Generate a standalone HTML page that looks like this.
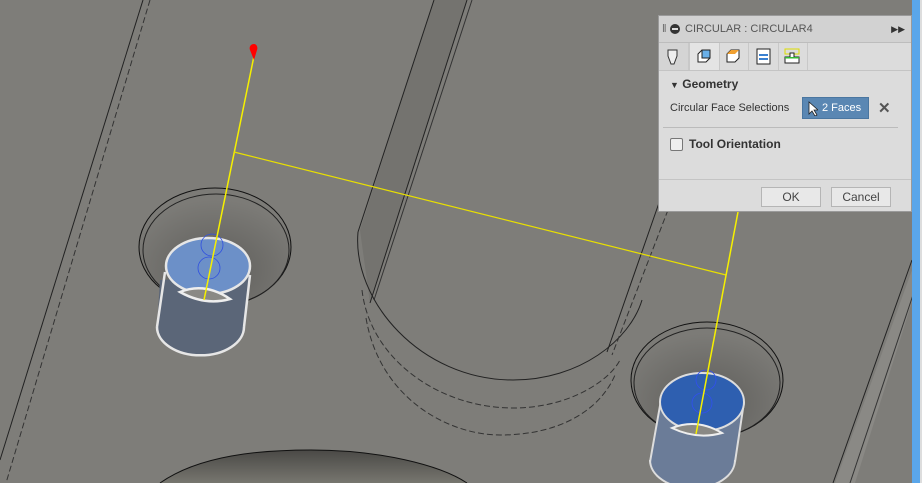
<!DOCTYPE html>
<html><head><meta charset="utf-8"><style>
body{margin:0;width:922px;height:483px;overflow:hidden;background:#7e7d79;font-family:"Liberation Sans",sans-serif;position:relative}
svg{position:absolute;left:0;top:0}
.dlg{position:absolute;left:658px;top:15px;width:254px;height:197px;background:#dcdcdc;border:1px solid #9a9a9a;box-sizing:border-box}
.title{height:26px;background:#d2d2d2;border-bottom:1px solid #bdbdbd;font-size:11px;color:#555;line-height:26px;padding-left:26px;position:relative}
.tabs{height:27px;border-bottom:1px solid #c4c4c4;position:relative}
.tab{position:absolute;top:0;width:29px;height:27px;border-right:1px solid #c8c8c8}
.btn{position:absolute;top:171px;height:18px;border:1px solid #b5b5b5;background:#e8e8e8;font-size:12px;color:#444;text-align:center;line-height:18px}
</style></head><body>
<svg width="922" height="483" viewBox="0 0 922 483">
<defs>
<radialGradient id="cs" cx="0.5" cy="0.7" r="0.6"><stop offset="0" stop-color="#5e5d5a"/><stop offset="1" stop-color="#7c7b77"/></radialGradient>
<linearGradient id="bh" x1="0" y1="0" x2="0" y2="1"><stop offset="0" stop-color="#4a4946"/><stop offset="1" stop-color="#77766f"/></linearGradient>
</defs>
<line x1="143" y1="0" x2="0" y2="460" stroke="#222" stroke-width="1"/>
<line x1="150" y1="0" x2="6" y2="483" stroke="#333" stroke-width="1" stroke-dasharray="6,3"/>
<polygon points="434,0 467,0 370,303 360,230" fill="#74736f"/>
<line x1="434" y1="0" x2="358" y2="232" stroke="#222"/>
<line x1="467" y1="0" x2="370" y2="303" stroke="#222"/>
<line x1="472" y1="0" x2="374" y2="300" stroke="#333"/>
<path d="M358,232 C352,300 420,380 513,380 C580,380 630,340 642,300" fill="none" stroke="#222"/>
<path d="M362,290 C370,360 440,408 513,408 C570,408 610,380 620,360" fill="none" stroke="#333" stroke-dasharray="6,3"/>
<path d="M366,318 C380,400 450,435 500,435 C560,435 600,410 615,375" fill="none" stroke="#333" stroke-dasharray="6,3"/>
<line x1="660" y1="200" x2="607" y2="352" stroke="#222"/>
<line x1="668" y1="210" x2="612" y2="355" stroke="#333" stroke-dasharray="6,3"/>
<polygon points="912,270 922,270 855,483 835,483" fill="#8a8985"/>
<line x1="912" y1="260" x2="833" y2="483" stroke="#222"/>
<line x1="918" y1="280" x2="850" y2="483" stroke="#333"/>
<path d="M160,483 C200,455 260,450 311,450 C380,450 440,465 467,483 Z" fill="url(#bh)"/>
<path d="M160,483 C200,455 260,450 311,450 C380,450 440,465 467,483" fill="none" stroke="#111"/>
<ellipse cx="215" cy="247" rx="76" ry="59" fill="url(#cs)" stroke="#111"/>
<ellipse cx="216" cy="250" rx="73" ry="56" fill="none" stroke="#222"/>
<path d="M160,280 L157,327 A43,28 0 0 0 244,327 L250,275 Z" fill="#5b6678" stroke="none"/>
<path d="M157,327 L165,272 M244,327 L250,275" stroke="#e6e6e6" stroke-width="2.5" fill="none"/>
<path d="M157,327 A43,28 0 0 0 244,327" stroke="#e6e6e6" stroke-width="2.5" fill="none"/>
<ellipse cx="208" cy="266" rx="42" ry="28" fill="#6c90c8" stroke="#e6e6e6" stroke-width="2.5"/>
<path d="M180,292 Q205,282 230,299 Q205,306 180,292Z" fill="#8a8985" stroke="#eee" stroke-width="2.5"/>
<circle cx="212" cy="245" r="11" fill="none" stroke="#3050e0" stroke-width="0.8"/>
<circle cx="209" cy="268" r="11" fill="none" stroke="#3050e0" stroke-width="0.8"/>
<ellipse cx="707" cy="380" rx="76" ry="58" fill="url(#cs)" stroke="#111"/>
<ellipse cx="707" cy="383" rx="73" ry="55" fill="none" stroke="#222"/>
<path d="M660,405 L650,460 A42,28 0 0 0 735,460 L744,402 Z" fill="#6b7c98"/>
<path d="M650,462 L661,400 M735,462 L744,402" stroke="#ddd" stroke-width="2" fill="none"/>
<path d="M650,460 A42,28 0 0 0 735,460" stroke="#ddd" stroke-width="2" fill="none"/>
<ellipse cx="702" cy="402" rx="42" ry="29" fill="#2e5fb0" stroke="#ddd" stroke-width="2"/>
<path d="M672,428 Q697,418 722,433 Q697,440 672,428Z" fill="#8a8985" stroke="#eee" stroke-width="2"/>
<circle cx="706" cy="380" r="10" fill="none" stroke="#3050f0" stroke-width="0.8"/>
<circle cx="702" cy="403" r="10" fill="none" stroke="#3050f0" stroke-width="0.8"/>
<line x1="254" y1="56" x2="204" y2="300" stroke="#f6f000" stroke-width="1.5"/>
<line x1="234" y1="152" x2="726" y2="275" stroke="#e8e000" stroke-width="1.2"/>
<line x1="738" y1="212" x2="696" y2="434" stroke="#f6f000" stroke-width="1.5"/>
<path d="M254,44 C250,44 249,48 250,50 L254,60 L257,50 C258,48 257,44 254,44Z" fill="#f00"/>
<rect x="912" y="0" width="8" height="483" fill="#5aa6ea"/>
<rect x="920" y="0" width="2" height="483" fill="#ddd"/>
</svg>
<div class="dlg">
 <div class="title"><span style="position:absolute;left:3px;top:0;color:#666">‖</span><span style="position:absolute;left:11px;top:8px;width:10px;height:10px;border-radius:50%;background:#333"></span><span style="position:absolute;left:13px;top:12px;width:6px;height:2px;background:#ddd"></span>CIRCULAR : CIRCULAR4<span style="position:absolute;right:6px;top:0;font-size:9px;color:#333">▶▶</span></div>
 <div class="tabs">
  <div class="tab" style="left:0;background:#d4d4d4"><svg width="29" height="27"><path d="M9,7 h9 v6 l-3,8 h-3 l-3,-8z" fill="#eee" stroke="#333"/></svg></div>
  <div class="tab" style="left:30px;background:#e4e4e4;border-left:1px solid #c8c8c8"><svg width="29" height="27"><path d="M8,11 l4,-4 h8 v8 l-4,4 h-8z" fill="#fff" stroke="#222"/><path d="M12,7 h8 v8 h-8z" fill="#6ab0e8" stroke="#222"/></svg></div>
  <div class="tab" style="left:60px"><svg width="29" height="27"><path d="M8,11 l4,-4 h8 v8 l-4,4 h-8z" fill="#fff" stroke="#222"/><path d="M8,11 l4,-4 h8 l-4,4z" fill="#f0a030"/></svg></div>
  <div class="tab" style="left:90px"><svg width="29" height="27"><rect x="8" y="6" width="13" height="15" fill="#fff" stroke="#222"/><rect x="10" y="11" width="9" height="2" fill="#3a80d0"/><rect x="10" y="15" width="9" height="2" fill="#3a80d0"/></svg></div>
  <div class="tab" style="left:119px"><svg width="29" height="27"><rect x="7" y="6" width="14" height="5" fill="none" stroke="#dd0"/><path d="M7,14 h5 v-4 h4 v4 h5 v6 h-14z" fill="#fff" stroke="#222"/><rect x="7" y="14" width="14" height="1.5" fill="#3b3"/></svg></div>
 </div>
 <div style="position:absolute;left:11px;top:61px;font-size:12px;font-weight:bold;color:#333"><span style="font-size:9px">▼</span> Geometry</div>
 <div style="position:absolute;left:11px;top:86px;font-size:11px;color:#333">Circular Face Selections</div>
 <div style="position:absolute;left:143px;top:81px;width:67px;height:22px;background:#5a87b3;border:1px solid #4a76a0;box-sizing:border-box;color:#fff;font-size:11px;line-height:20px;padding-left:19px">2 Faces<svg style="position:absolute;left:5px;top:3px" width="10" height="15"><path d="M1,1 v12 l3,-3 l3,5 l2,-1 l-3,-5 h4z" fill="#fff" stroke="#222" stroke-width="0.8"/></svg></div>
 <div style="position:absolute;left:219px;top:83px;font-size:15px;color:#555;font-weight:bold">✕</div>
 <div style="position:absolute;left:4px;top:111px;width:235px;height:1px;background:#bbb"></div>
 <div style="position:absolute;left:11px;top:122px;width:11px;height:11px;border:1px solid #777;border-radius:2px;background:#eee"></div>
 <div style="position:absolute;left:30px;top:121px;font-size:12px;font-weight:bold;color:#333">Tool Orientation</div>
 <div style="position:absolute;left:0;top:163px;width:252px;height:1px;background:#c4c4c4"></div>
 <div class="btn" style="left:102px;width:58px">OK</div>
 <div class="btn" style="left:172px;width:58px">Cancel</div>
</div>
</body></html>
